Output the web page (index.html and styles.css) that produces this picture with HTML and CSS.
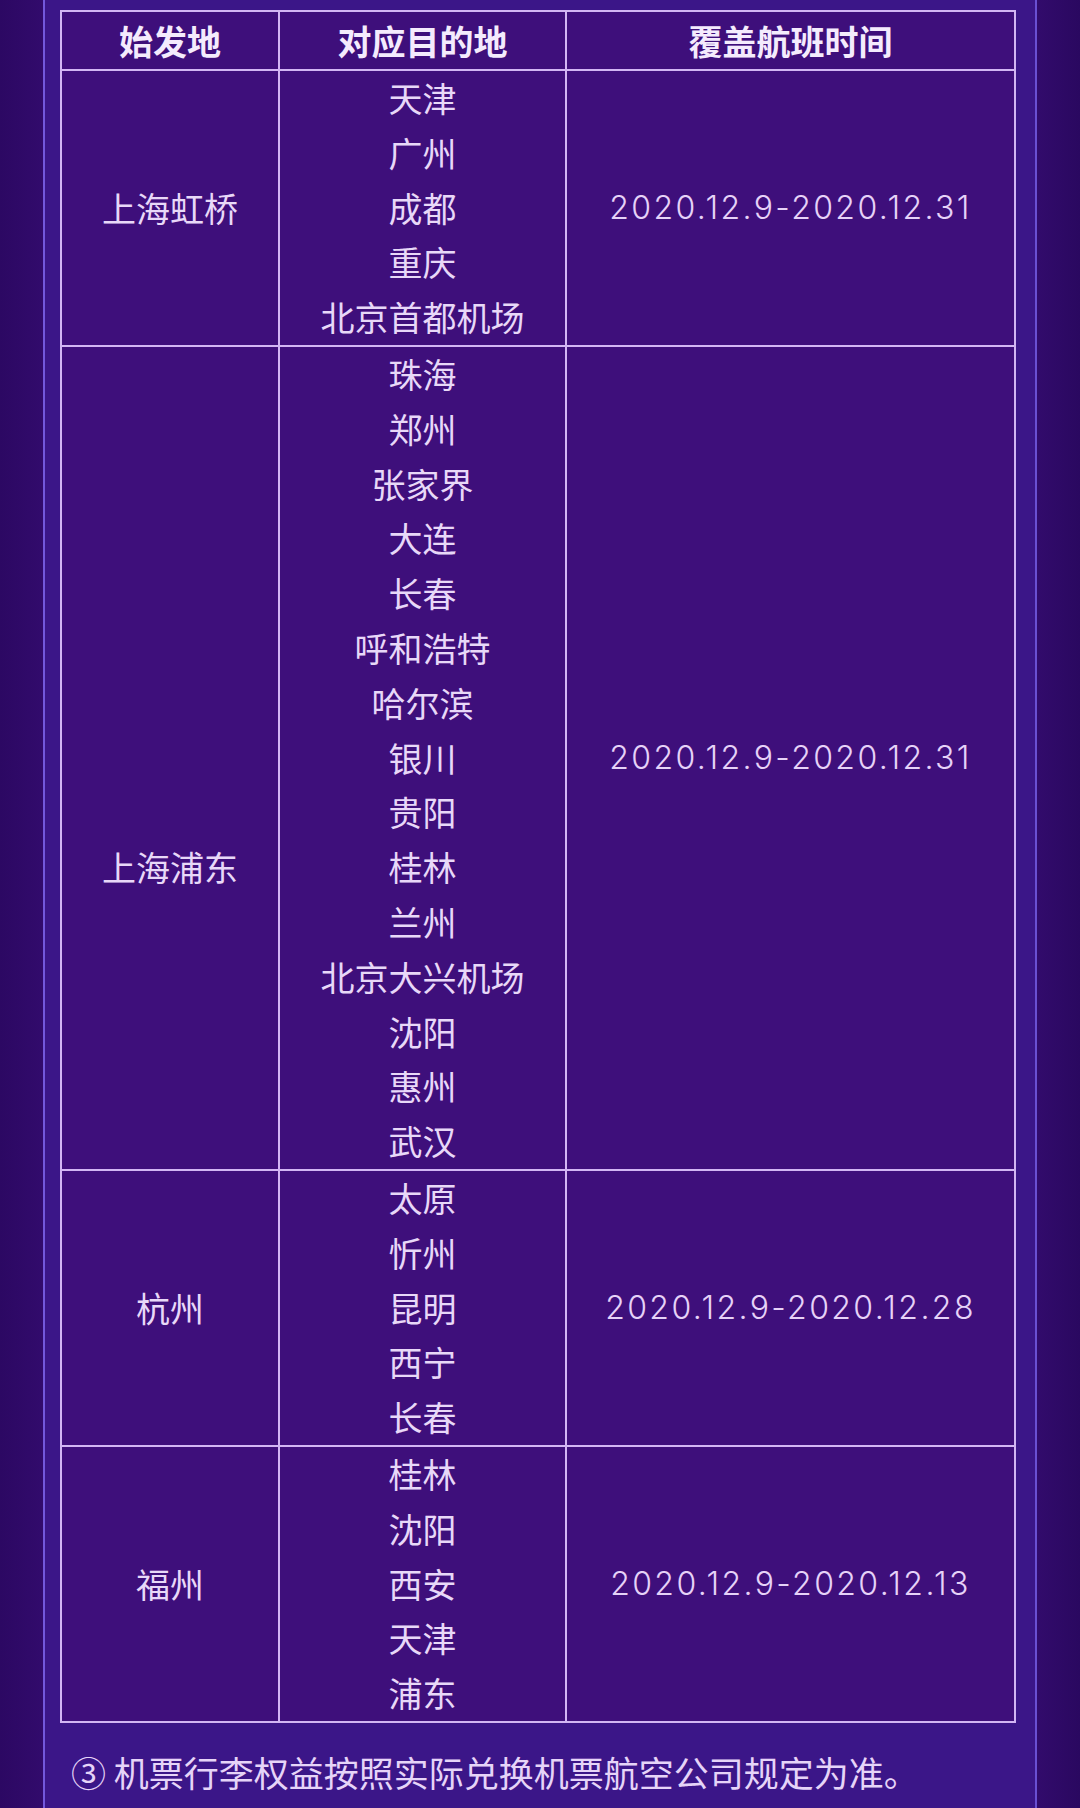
FILE: index.html
```html
<!DOCTYPE html>
<html lang="zh-CN">
<head>
<meta charset="utf-8">
<link rel="stylesheet" href="styles.css">
</head>
<body>
<div class="page">
  <div class="panel">
    <table class="flights">
      <thead>
        <tr><th class="c1">始发地</th><th class="c2">对应目的地</th><th class="c3">覆盖航班时间</th></tr>
      </thead>
      <tbody>
        <tr>
          <td class="origin">上海虹桥</td>
          <td class="dest"><div>天津</div><div>广州</div><div>成都</div><div>重庆</div><div>北京首都机场</div></td>
          <td class="date">2020.12.9-2020.12.31</td>
        </tr>
        <tr>
          <td class="origin origin-low">上海浦东</td>
          <td class="dest"><div>珠海</div><div>郑州</div><div>张家界</div><div>大连</div><div>长春</div><div>呼和浩特</div><div>哈尔滨</div><div>银川</div><div>贵阳</div><div>桂林</div><div>兰州</div><div>北京大兴机场</div><div>沈阳</div><div>惠州</div><div>武汉</div></td>
          <td class="date">2020.12.9-2020.12.31</td>
        </tr>
        <tr>
          <td class="origin">杭州</td>
          <td class="dest"><div>太原</div><div>忻州</div><div>昆明</div><div>西宁</div><div>长春</div></td>
          <td class="date">2020.12.9-2020.12.28</td>
        </tr>
        <tr>
          <td class="origin">福州</td>
          <td class="dest"><div>桂林</div><div>沈阳</div><div>西安</div><div>天津</div><div>浦东</div></td>
          <td class="date">2020.12.9-2020.12.13</td>
        </tr>
      </tbody>
    </table>
    <p class="note">③ 机票行李权益按照实际兑换机票航空公司规定为准。</p>
  </div>
</div>
</body>
</html>
```
FILE: styles.css
```css
html, body {
  margin: 0;
  padding: 0;
}
body {
  background: linear-gradient(90deg, #2c0863 0%, #320b6c 4%, #320b6c 96%, #2a0860 100%);
  font-family: "Noto Sans CJK SC", "Noto Sans", sans-serif;
  color: #e8d8f8;
}
.page {
  width: 1080px;
  height: 1808px;
  overflow: hidden;
}
.panel {
  margin: 0 43px;
  height: 1808px;
  background: #3b1688;
  border-left: 2px solid #7358dc;
  border-right: 2px solid #6a50d2;
  padding: 10px 18px 0 15px;
  box-sizing: border-box;
}
.flights {
  width: 956px;
  border-collapse: collapse;
  background: #3e0f7b;
  table-layout: fixed;
}
.flights th, .flights td {
  border: 2px solid #d2b6f4;
  padding: 0;
  text-align: center;
  vertical-align: middle;
}
.c1 { width: 216px; }
.c2 { width: 285px; }
.c3 { width: auto; }
.flights th {
  height: 57px;
  font-size: 34px;
  font-weight: 700;
  color: #f4ebfd;
  line-height: 57px;
}
.origin {
  font-size: 34px;
  font-weight: 400;
}
.flights td.origin-low {
  padding-top: 218px;
}
.dest div {
  font-size: 34px;
  line-height: 54.8px;
}
.date {
  font-family: Inter, "Noto Sans", sans-serif;
  font-size: 32px;
  font-weight: 300;
  letter-spacing: 2.4px;
  color: #e6d2f8;
}
.note {
  margin: 26px 0 0 11px;
  font-size: 35px;
  line-height: 46px;
  color: #e6d4f8;
}
```
